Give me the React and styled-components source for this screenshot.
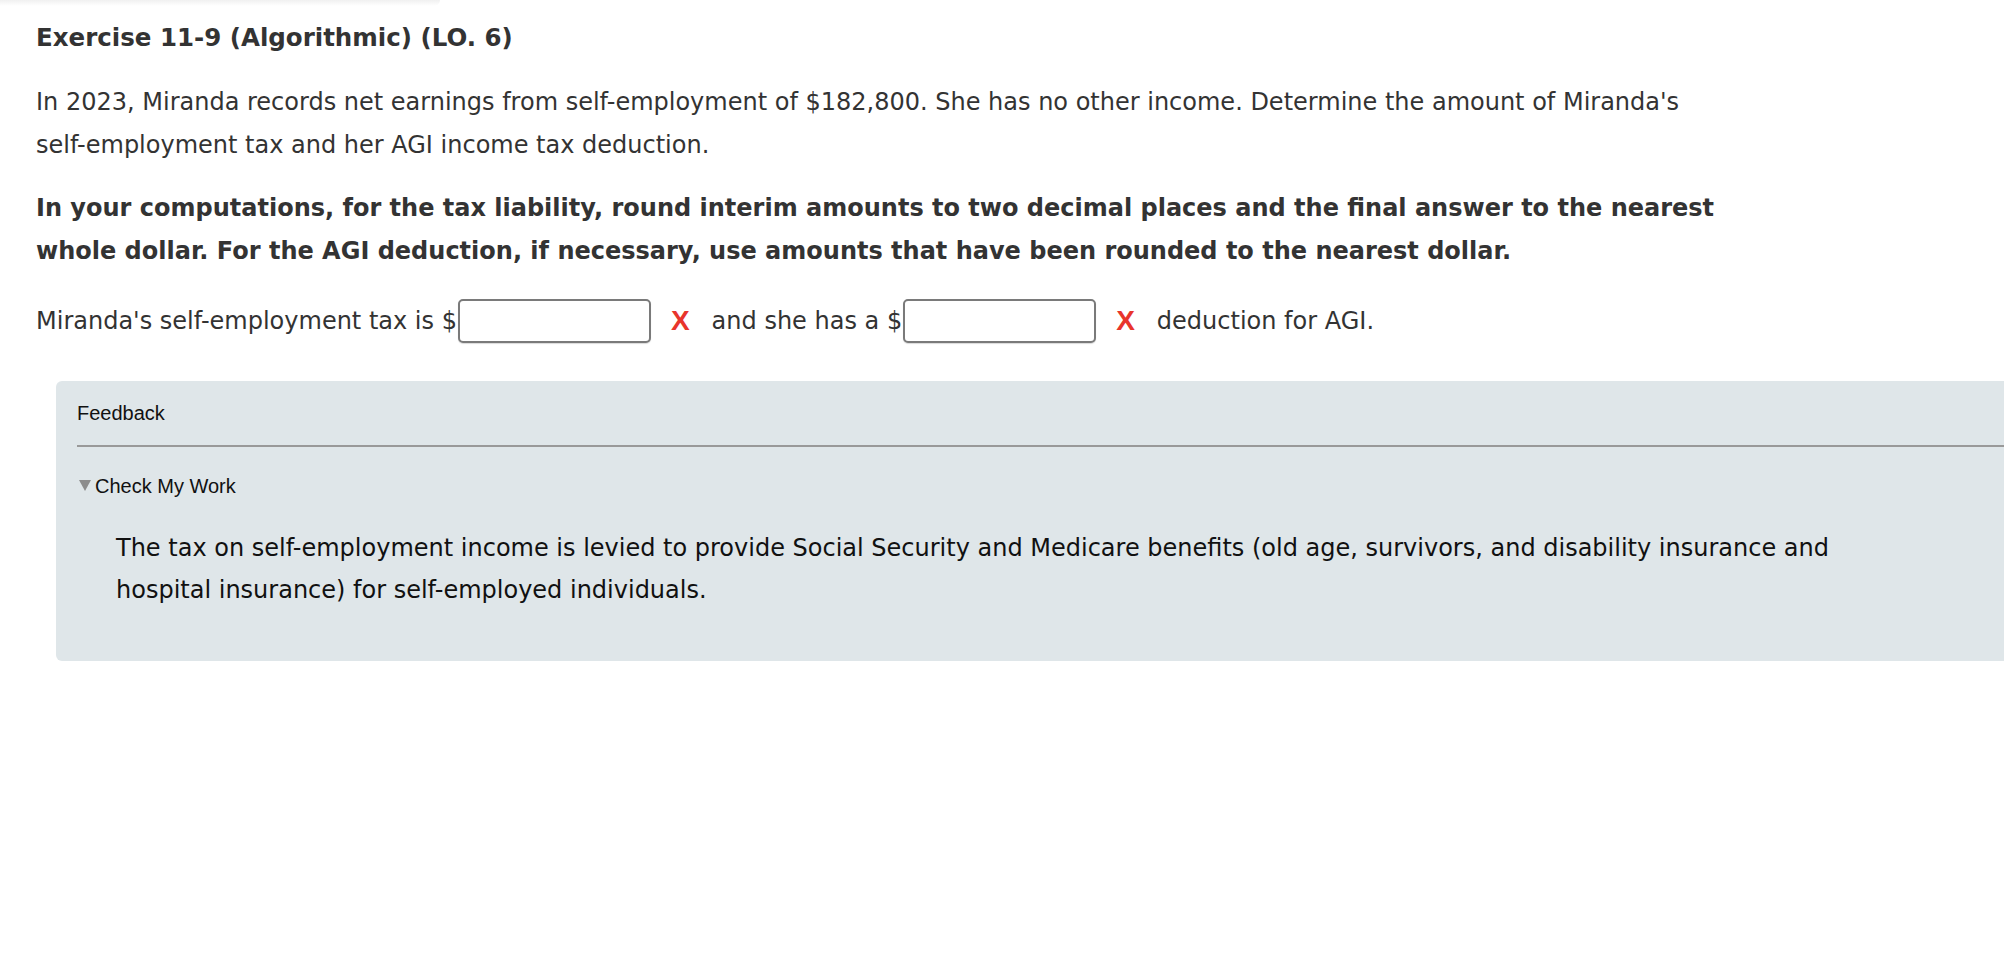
import React from "react";
import styled, { createGlobalStyle } from "styled-components";

const Global = createGlobalStyle`
  html, body { margin: 0; padding: 0; background: #fff; }
  body { font-family: "DejaVu Sans", Verdana, sans-serif; color: #333; overflow: hidden; }
`;

const TopShade = styled.div`
  position: absolute;
  top: 0;
  left: 0;
  width: 440px;
  height: 6px;
  background: linear-gradient(to bottom, rgba(0,0,0,0.06), rgba(0,0,0,0));
  border-bottom-right-radius: 6px;
`;

const Page = styled.div`
  width: 2004px;
  height: 966px;
  box-sizing: border-box;
  padding: 22px 0 0 36px;
  position: relative;
`;

const Title = styled.h1`
  margin: 0;
  font-size: 24.5px;
  font-weight: bold;
  line-height: 32px;
  color: #333;
`;

const Para = styled.p`
  margin: ${(p) => p.$mt || 0}px 0 0 0;
  font-size: 24px;
  line-height: 43px;
  font-weight: ${(p) => (p.$bold ? "bold" : "normal")};
  max-width: 1688px;
`;

const AnswerRow = styled.div`
  margin-top: 25px;
  display: flex;
  align-items: center;
  font-size: 24px;
  height: 46px;
`;

const Input = styled.input`
  box-sizing: border-box;
  width: 193px;
  height: 44px;
  border: 2px solid #7a7a7a;
  border-radius: 5px;
  background: #fff;
  margin: 0 0 0 1px;
  box-shadow: 0 1px 1px rgba(0,0,0,0.15);
  outline: none;
`;

const Wrong = styled.span`
  font-family: "Liberation Sans", Arial, sans-serif;
  font-weight: bold;
  color: #e8352c;
  font-size: 28px;
  margin: 0 22px 0 20px;
`;

const Panel = styled.section`
  margin: 37px 0 0 20px;
  background: #dfe6e9;
  border-radius: 6px 0 0 6px;
  padding: 21px 0 0 21px;
  height: 280px;
  box-sizing: border-box;
`;

const PanelHead = styled.div`
  font-family: "Liberation Sans", Arial, sans-serif;
  font-size: 20px;
  color: #111;
  line-height: 22px;
  padding-bottom: 21px;
  border-bottom: 2px solid #999;
`;

const Summary = styled.div`
  display: flex;
  align-items: center;
  margin-top: 27px;
  font-family: "Liberation Sans", Arial, sans-serif;
  font-size: 20px;
  color: #111;
  line-height: 24px;
`;

const Tri = styled.span`
  width: 0;
  height: 0;
  border-left: 6px solid transparent;
  border-right: 6px solid transparent;
  border-top: 11px solid #8c8c8c;
  margin: 0 4px 2px 2px;
`;

const Body = styled.p`
  margin: 29px 0 0 39px;
  font-family: "DejaVu Sans", Verdana, sans-serif;
  font-size: 24px;
  line-height: 42px;
  color: #111;
  max-width: 1760px;
`;

export default function App() {
  return (
    <>
      <Global />
      <Page>
        <TopShade />
        <Title>Exercise 11-9 (Algorithmic) (LO. 6)</Title>
        <Para $mt={27}>
          In 2023, Miranda records net earnings from self-employment of $182,800. She has no other income. Determine the amount of Miranda's self-employment tax and her AGI income tax deduction.
        </Para>
        <Para $mt={20} $bold>
          In your computations, for the tax liability, round interim amounts to two decimal places and the final answer to the nearest whole dollar. For the AGI deduction, if necessary, use amounts that have been rounded to the nearest dollar.
        </Para>
        <AnswerRow>
          Miranda's self-employment tax is $
          <Input type="text" />
          <Wrong>X</Wrong>
          and she has a $
          <Input type="text" />
          <Wrong>X</Wrong>
          deduction for AGI.
        </AnswerRow>
        <Panel>
          <PanelHead>Feedback</PanelHead>
          <Summary>
            <Tri />
            Check My Work
          </Summary>
          <Body>
            The tax on self-employment income is levied to provide Social Security and Medicare benefits (old age, survivors, and disability insurance and hospital insurance) for self-employed individuals.
          </Body>
        </Panel>
      </Page>
    </>
  );
}
